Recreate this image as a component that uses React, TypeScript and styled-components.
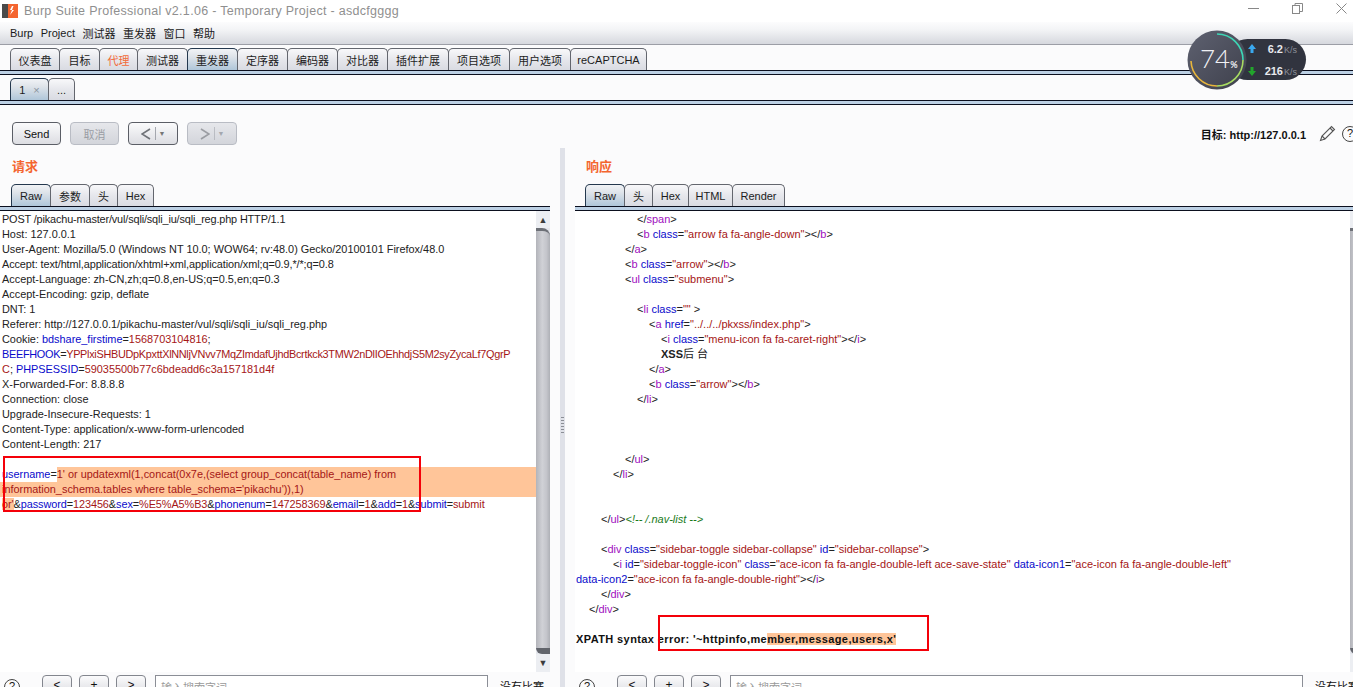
import React from 'react';
import styled, { createGlobalStyle } from 'styled-components';

const GlobalStyle = createGlobalStyle`
  html, body {
    margin: 0;
    padding: 0;
    background: #fbfbfc;
  }
  * {
    box-sizing: border-box;
  }
`;

const FONT = `"Liberation Sans", "Noto Sans CJK SC", sans-serif`;

const MAIN_TABS = [
  { label: '仪表盘', w: 49 },
  { label: '目标', w: 40 },
  { label: '代理', w: 38, hot: true },
  { label: '测试器', w: 50 },
  { label: '重发器', w: 50, active: true },
  { label: '定序器', w: 50 },
  { label: '编码器', w: 50 },
  { label: '对比器', w: 50 },
  { label: '插件扩展', w: 61 },
  { label: '项目选项', w: 61 },
  { label: '用户选项', w: 61 },
  { label: 'reCAPTCHA', w: 76 },
];

type Tok = [string, string?];

// k = key, v = value, t = tag, g = green comment
const REQUEST_HEAD: { toks: Tok[]; tight?: number }[] = [
  { toks: [['POST /pikachu-master/vul/sqli/sqli_iu/sqli_reg.php HTTP/1.1']], tight: 0.15 },
  { toks: [['Host: 127.0.0.1']] },
  { toks: [['User-Agent: Mozilla/5.0 (Windows NT 10.0; WOW64; rv:48.0) Gecko/20100101 Firefox/48.0']] },
  { toks: [['Accept: text/html,application/xhtml+xml,application/xml;q=0.9,*/*;q=0.8']], tight: 0.1 },
  { toks: [['Accept-Language: zh-CN,zh;q=0.8,en-US;q=0.5,en;q=0.3']] },
  { toks: [['Accept-Encoding: gzip, deflate']] },
  { toks: [['DNT: 1']] },
  { toks: [['Referer: http://127.0.0.1/pikachu-master/vul/sqli/sqli_iu/sqli_reg.php']] },
  { toks: [['Cookie: '], ['bdshare_firstime', 'k'], ['='], ['1568703104816', 'v'], [';']] },
  { toks: [['BEEFHOOK', 'k'], ['='], ['YPPlxiSHBUDpKpxttXlNNljVNvv7MqZImdafUjhdBcrtkck3TMW2nDlIOEhhdjS5M2syZycaLf7QgrP', 'v']], tight: 0.3 },
  { toks: [['C', 'v'], ['; '], ['PHPSESSID', 'k'], ['='], ['59035500b77c6bdeadd6c3a157181d4f', 'v']] },
  { toks: [['X-Forwarded-For: 8.8.8.8']] },
  { toks: [['Connection: close']] },
  { toks: [['Upgrade-Insecure-Requests: 1']] },
  { toks: [['Content-Type: application/x-www-form-urlencoded']] },
  { toks: [['Content-Length: 217']] },
  { toks: [] },
];

const RESPONSE: { indent: number; toks: Tok[] }[] = [
  { indent: 62, toks: [['</'], ['span', 't'], ['>']] },
  { indent: 62, toks: [['<'], ['b', 't'], [' '], ['class', 'k'], ['='], ['"arrow fa fa-angle-down"', 'v'], ['></'], ['b', 't'], ['>']] },
  { indent: 50, toks: [['</'], ['a', 't'], ['>']] },
  { indent: 50, toks: [['<'], ['b', 't'], [' '], ['class', 'k'], ['='], ['"arrow"', 'v'], ['></'], ['b', 't'], ['>']] },
  { indent: 50, toks: [['<'], ['ul', 't'], [' '], ['class', 'k'], ['='], ['"submenu"', 'v'], ['>']] },
  { indent: 0, toks: [] },
  { indent: 62, toks: [['<'], ['li', 't'], [' '], ['class', 'k'], ['='], ['""', 'v'], [' >']] },
  { indent: 74, toks: [['<'], ['a', 't'], [' '], ['href', 'k'], ['='], ['"../../../pkxss/index.php"', 'v'], ['>']] },
  { indent: 86, toks: [['<'], ['i', 't'], [' '], ['class', 'k'], ['='], ['"menu-icon fa fa-caret-right"', 'v'], ['></'], ['i', 't'], ['>']] },
  { indent: 86, toks: [['XSS', 'b'], ['后 台']] },
  { indent: 74, toks: [['</'], ['a', 't'], ['>']] },
  { indent: 74, toks: [['<'], ['b', 't'], [' '], ['class', 'k'], ['='], ['"arrow"', 'v'], ['></'], ['b', 't'], ['>']] },
  { indent: 62, toks: [['</'], ['li', 't'], ['>']] },
  { indent: 0, toks: [] },
  { indent: 0, toks: [] },
  { indent: 0, toks: [] },
  { indent: 50, toks: [['</'], ['ul', 't'], ['>']] },
  { indent: 38, toks: [['</'], ['li', 't'], ['>']] },
  { indent: 0, toks: [] },
  { indent: 0, toks: [] },
  { indent: 26, toks: [['</'], ['ul', 't'], ['>'], ['<!-- /.nav-list -->', 'g']] },
  { indent: 0, toks: [] },
  { indent: 26, toks: [['<'], ['div', 't'], [' '], ['class', 'k'], ['='], ['"sidebar-toggle sidebar-collapse"', 'v'], [' '], ['id', 'k'], ['='], ['"sidebar-collapse"', 'v'], ['>']] },
  { indent: 38, toks: [['<'], ['i', 't'], [' '], ['id', 'k'], ['='], ['"sidebar-toggle-icon"', 'v'], [' '], ['class', 'k'], ['='], ['"ace-icon fa fa-angle-double-left ace-save-state"', 'v'], [' '], ['data-icon1', 'k'], ['='], ['"ace-icon fa fa-angle-double-left"', 'v']] },
  { indent: 1, toks: [['data-icon2', 'k'], ['='], ['"ace-icon fa fa-angle-double-right"', 'v'], ['></'], ['i', 't'], ['>']] },
  { indent: 26, toks: [['</'], ['div', 't'], ['>']] },
  { indent: 14, toks: [['</'], ['div', 't'], ['>']] },
  { indent: 0, toks: [] },
];

const Page = styled.div`
  position: relative;
  width: 1353px;
  height: 687px;
  overflow: hidden;
  display: flex;
  flex-direction: column;
  background: #fbfbfc;
  font-family: ${FONT};
  color: #111;
`;

const TitleBar = styled.div`
  height: 22px;
  flex: none;
  background: #fff;
  display: flex;
  align-items: center;
  padding-left: 2px;
  gap: 6px;
  font-size: 12.5px;
  letter-spacing: 0.3px;
  color: #8f8f8f;
`;

const WindowButtons = styled.div`
  margin-left: auto;
  display: flex;
  align-items: center;
  gap: 33px;
  padding: 0 6px 5px 0;
  height: 100%;
`;

const MenuBar = styled.div`
  height: 23px;
  flex: none;
  display: flex;
  align-items: center;
  padding: 0 0 0 10px;
  gap: 7.5px;
  font-size: 11px;
  background: linear-gradient(#fcfcfd, #f3f4f6 35%, #d6d8de);
  border-bottom: 1px solid #9c9ea6;
`;

const MenuItem = styled.span`
  color: #1a1a1a;
`;

const TabStrip = styled.div<{ $height: number }>`
  height: ${(p) => p.$height}px;
  flex: none;
  display: flex;
  align-items: flex-end;
  padding-left: 10px;
`;

const Tab = styled.div<{ $w: number; $active?: boolean; $hot?: boolean }>`
  width: ${(p) => p.$w}px;
  height: 22px;
  flex: none;
  display: flex;
  align-items: center;
  justify-content: center;
  gap: 8px;
  font-size: 11px;
  white-space: nowrap;
  color: ${(p) => (p.$hot ? '#f26b3a' : '#1c1c1c')};
  border: 1px solid ${(p) => (p.$active ? '#24384e' : '#63666e')};
  border-bottom: none;
  border-radius: 5px 5px 0 0;
  background: ${(p) =>
    p.$active
      ? 'linear-gradient(#f1f3f6, #dfe4ea 35%, #afc6d9)'
      : 'linear-gradient(#f8f8fa, #e6e7ec 50%, #d9dbe2)'};
  margin-right: -1px;
`;

const CloseMark = styled.span`
  font-size: 11px;
  color: #8a949e;
`;

const BlueRule = styled.div`
  height: 5px;
  flex: none;
  width: 100%;
  background: #bcd0e4;
  border-top: 1px solid #0b0f1e;
  border-bottom: 1px solid #0b0f1e;
`;

const Toolbar = styled.div`
  height: 41px;
  flex: none;
  display: flex;
  align-items: flex-end;
  padding: 0 0 1px 12px;
`;

const ToolButton = styled.div<{ $w: number; $off?: boolean; $gap: number }>`
  width: ${(p) => p.$w}px;
  height: 23px;
  margin-right: ${(p) => p.$gap}px;
  display: flex;
  align-items: center;
  justify-content: center;
  font-size: 11px;
  border-radius: 4px;
  color: ${(p) => (p.$off ? '#9a9da4' : '#111')};
  border: 1px solid ${(p) => (p.$off ? '#b9bcc4' : '#5b5e66')};
  background: ${(p) =>
    p.$off ? 'linear-gradient(#e6e7eb, #d3d5db)' : 'linear-gradient(#fbfbfc, #dcdde2)'};
`;

const ArrowSlot = styled.span<{ $off?: boolean }>`
  display: flex;
  align-items: center;
  height: 13px;
  padding-right: 4px;
  margin-right: 3px;
  border-right: 1px solid #a4a7ae;
  opacity: ${(p) => (p.$off ? 0.6 : 1)};
`;

const DropGlyph = styled.span<{ $off?: boolean }>`
  font-size: 7px;
  color: ${(p) => (p.$off ? '#a4a7ae' : '#777')};
`;

const Target = styled.div`
  margin-left: auto;
  display: flex;
  align-items: center;
  gap: 13px;
  height: 23px;
  font-size: 11px;
  font-weight: 700;
  margin-right: -5px;
`;

const Panels = styled.div`
  flex: 1;
  display: flex;
  min-height: 0;
`;

const Pane = styled.section<{ $w: number }>`
  width: ${(p) => p.$w}px;
  flex: none;
  display: flex;
  flex-direction: column;
`;

const Heading = styled.div<{ $pad: number }>`
  height: 38px;
  flex: none;
  display: flex;
  align-items: flex-end;
  padding: 0 0 9px ${(p) => p.$pad}px;
  font-size: 13px;
  font-weight: 700;
  color: #f4652f;
`;

const PaneTabs = styled.div<{ $pad: number }>`
  display: flex;
  padding-left: ${(p) => p.$pad}px;
  flex: none;
`;

const Divider = styled.div`
  width: 25px;
  flex: none;
  display: flex;
  justify-content: center;
  padding-top: 2px;
`;

const SplitBar = styled.div`
  width: 5px;
  height: 100%;
  background: #dfe1e8;
  display: flex;
  align-items: center;
  justify-content: center;
  padding-top: 14px;
`;

const SplitGrip = styled.div`
  width: 3px;
  height: 16px;
  background: repeating-linear-gradient(#8b8e96 0 1px, transparent 1px 3px);
`;

const EditorRow = styled.div`
  height: 461px;
  flex: none;
  display: flex;
  background: #fff;
`;

const Code = styled.div<{ $size: number }>`
  flex: 1;
  min-width: 0;
  padding-top: 1px;
  font-size: ${(p) => p.$size}px;
  line-height: 15px;
  white-space: pre;
  color: #222;
  background: #fff;
  overflow: hidden;
`;

const CodeLine = styled.div<{ $indent?: number; $tight?: number }>`
  height: 15px;
  padding-left: ${(p) => p.$indent ?? 2}px;
  letter-spacing: ${(p) => -(p.$tight ?? 0)}px;
`;

const FillLine = styled(CodeLine)`
  display: flex;
`;

const SelectedLine = styled(CodeLine)`
  background: #ffc599;
`;

const Tone = styled.span<{ $k?: string }>`
  color: ${(p) =>
    p.$k === 'k'
      ? '#0a0acb'
      : p.$k === 'v'
        ? '#a51616'
        : p.$k === 't'
          ? '#a010c0'
          : p.$k === 'g'
            ? '#1a7a1a'
            : '#222'};
  font-weight: ${(p) => (p.$k === 'b' ? 700 : 400)};
  font-style: ${(p) => (p.$k === 'g' ? 'italic' : 'normal')};
`;

const Sel = styled.span<{ $fill?: boolean }>`
  background: #ffc599;
  flex: ${(p) => (p.$fill ? 1 : 'none')};
`;

const Bold = styled.span<{ $hl?: boolean }>`
  font-weight: 700;
  color: #111;
  letter-spacing: 0.4px;
  background: ${(p) => (p.$hl ? '#ffc599' : 'transparent')};
`;

const Scrollbar = styled.div`
  width: 14px;
  flex: none;
  display: flex;
  flex-direction: column;
  background: #e4e6ec;
`;

const ScrollEnd = styled.div<{ $h: number }>`
  height: ${(p) => p.$h}px;
  flex: none;
  font-size: 9px;
  display: flex;
  align-items: center;
  justify-content: center;
  color: #3c3c3c;
  background: #eceef2;
`;

const ScrollThumb = styled.div`
  flex: 1;
  border-radius: 0 8px 0 6px;
  background: linear-gradient(90deg, #b3b4ba, #d0d1d6 45%, #c4c5cb 75%, #aeb0b6);
  border-top: 3px solid #6d7077;
  border-bottom: 6px solid #62656c;
`;

const FooterBar = styled.div`
  flex: 1;
  display: flex;
  align-items: flex-start;
  padding: 3px 0 0 4px;
  font-size: 11px;
  overflow: hidden;
`;

const HelpRound = styled.div`
  width: 16px;
  height: 16px;
  flex: none;
  border: 1.5px solid #444;
  border-radius: 50%;
  font-size: 11px;
  font-weight: 400;
  line-height: 13px;
  text-align: center;
`;

const FooterHelp = styled(HelpRound)`
  margin: 4px 22px 0 0;
`;

const TargetHelp = styled(HelpRound)`
  margin-left: -7px;
`;

const MiniButton = styled.div`
  width: 30px;
  height: 20px;
  flex: none;
  margin-right: 7px;
  text-align: center;
  border: 1px solid #83868e;
  border-radius: 4px;
  background: linear-gradient(#fbfbfc, #dcdde2);
  line-height: 18px;
  font-size: 12px;
`;

const SearchInput = styled.div<{ $w: number }>`
  height: 20px;
  flex: none;
  width: ${(p) => p.$w}px;
  margin: 0 12px 0 2px;
  padding: 3px 5px 0;
  background: #fff;
  border: 1px solid #8b8e96;
  color: #9a9a9a;
  font-size: 11px;
`;

const FooterHint = styled.span`
  padding-top: 3px;
  white-space: nowrap;
`;

const RedBox = styled.div<{ $x: number; $y: number; $w: number; $h: number }>`
  position: absolute;
  left: ${(p) => p.$x}px;
  top: ${(p) => p.$y}px;
  width: ${(p) => p.$w}px;
  height: ${(p) => p.$h}px;
  border: 2px solid #f40009;
  pointer-events: none;
`;

const SpeedWidget = styled.div`
  position: absolute;
  left: 1187px;
  top: 30px;
  width: 120px;
  height: 60px;
`;

const SpeedPill = styled.div`
  position: absolute;
  left: 40px;
  top: 9px;
  width: 79px;
  height: 41px;
  border-radius: 21px;
  background: #31343f;
  color: #e8e9ee;
  font-size: 11px;
  font-weight: 700;
`;

const SpeedRow = styled.div<{ $top: number }>`
  position: absolute;
  top: ${(p) => p.$top}px;
  right: 9px;
  left: 20px;
  height: 14px;
  display: flex;
  align-items: center;
  justify-content: space-between;
`;

const SpeedUnit = styled.span`
  font-size: 9px;
  font-weight: 400;
  color: #8d909a;
  margin-left: 1px;
`;

const Dial = styled.div`
  position: absolute;
  inset: 0 auto 0 0;
  width: 60px;
  height: 60px;
`;

const DialText = styled.div`
  position: absolute;
  left: 13px;
  top: 14px;
  color: #f0f1f4;
  font-size: 26px;
  font-weight: 300;
  font-family: Lato, ${FONT};
  line-height: 28px;
  white-space: nowrap;
`;

const DialPct = styled.span`
  font-size: 9px;
  font-weight: 700;
`;

function Tokens({ toks }: { toks: Tok[] }) {
  return (
    <>
      {toks.map(([text, kind], i) => (
        <Tone key={i} $k={kind}>
          {text}
        </Tone>
      ))}
    </>
  );
}

function BurpLogo() {
  return (
    <svg width="16" height="16" viewBox="0 0 16 16">
      <rect x="0" y="1" width="8" height="14" fill="#4a4a4a" />
      <rect x="6" y="1" width="10" height="14" fill="#f4652f" />
      <path d="M10 3 L8 7 H10 L8 12 L12 7 H10 L11.5 3 Z" fill="#fff" />
    </svg>
  );
}

function Pencil() {
  return (
    <svg width="17" height="17" viewBox="0 0 17 17" fill="none" stroke="#555" strokeWidth="1.1">
      <path d="M1.5 15.5 L3 11 L12.5 1.5 L15.5 4.5 L6 14 Z" />
      <path d="M3 11 L6 14 M11 3 L14 6" />
    </svg>
  );
}

function Chevron({ right }: { right?: boolean }) {
  return (
    <svg width="10" height="12" viewBox="0 0 10 12" fill="none" stroke="#6f7278" strokeWidth="1.6">
      <path d={right ? 'M1 1 L9 6 L1 11' : 'M9 1 L1 6 L9 11'} />
    </svg>
  );
}

function Footer({ inputW }: { inputW: number }) {
  return (
    <FooterBar>
      <FooterHelp>?</FooterHelp>
      <MiniButton>&lt;</MiniButton>
      <MiniButton>+</MiniButton>
      <MiniButton>&gt;</MiniButton>
      <SearchInput $w={inputW}>输入搜索字词</SearchInput>
      <FooterHint>没有比赛</FooterHint>
    </FooterBar>
  );
}

function VScroll() {
  return (
    <Scrollbar>
      <ScrollEnd $h={17}>▲</ScrollEnd>
      <ScrollThumb />
      <ScrollEnd $h={18}>▼</ScrollEnd>
    </Scrollbar>
  );
}

export default function App() {
  return (
    <>
      <GlobalStyle />
      <Page>
        <TitleBar>
          <BurpLogo />
          <span>Burp Suite Professional v2.1.06 - Temporary Project - asdcfgggg</span>
          <WindowButtons>
            <svg width="11" height="2"><rect width="11" height="1" fill="#888" /></svg>
            <svg width="11" height="11" fill="none" stroke="#888">
              <rect x="0.5" y="2.5" width="7" height="8" />
              <path d="M3 2.5 V0.5 H10.5 V8.5 H7.5" />
            </svg>
            <svg width="11" height="11" stroke="#888"><path d="M0.5 0.5 L10.5 10.5 M10.5 0.5 L0.5 10.5" /></svg>
          </WindowButtons>
        </TitleBar>
        <MenuBar>
          {['Burp', 'Project', '测试器', '重发器', '窗口', '帮助'].map((m) => (
            <MenuItem key={m}>{m}</MenuItem>
          ))}
        </MenuBar>
        <TabStrip $height={25}>
          {MAIN_TABS.map((t) => (
            <Tab key={t.label} $w={t.w + 1} $active={t.active} $hot={t.hot}>
              {t.label}
            </Tab>
          ))}
        </TabStrip>
        <BlueRule />
        <TabStrip $height={25}>
          <Tab $w={39} $active>
            1 <CloseMark>×</CloseMark>
          </Tab>
          <Tab $w={27}>...</Tab>
        </TabStrip>
        <BlueRule />
        <Toolbar>
          <ToolButton $w={49} $gap={9}>Send</ToolButton>
          <ToolButton $w={49} $gap={9} $off>取消</ToolButton>
          <ToolButton $w={50} $gap={9}>
            <ArrowSlot><Chevron /></ArrowSlot>
            <DropGlyph>▼</DropGlyph>
          </ToolButton>
          <ToolButton $w={50} $gap={0} $off>
            <ArrowSlot $off><Chevron right /></ArrowSlot>
            <DropGlyph $off>▼</DropGlyph>
          </ToolButton>
          <Target>
            <span>目标: http://127.0.0.1</span>
            <Pencil />
            <TargetHelp>?</TargetHelp>
          </Target>
        </Toolbar>
        <Panels>
          <Pane $w={550}>
            <Heading $pad={12}>请求</Heading>
            <PaneTabs $pad={11}>
              <Tab $w={40} $active>Raw</Tab>
              <Tab $w={40}>参数</Tab>
              <Tab $w={29}>头</Tab>
              <Tab $w={37}>Hex</Tab>
            </PaneTabs>
            <BlueRule />
            <EditorRow>
              <Code $size={10.9}>
                {REQUEST_HEAD.map((l, i) => (
                  <CodeLine key={i} $tight={l.tight}>
                    <Tokens toks={l.toks} />
                  </CodeLine>
                ))}
                <FillLine>
                  <Tone $k="k">username</Tone>=
                  <Sel $fill><Tone $k="v">1' or updatexml(1,concat(0x7e,(select group_concat(table_name) from</Tone></Sel>
                </FillLine>
                <SelectedLine>
                  <Tone $k="v">information_schema.tables where table_schema='pikachu')),1)</Tone>
                </SelectedLine>
                <CodeLine $tight={0.08}>
                  <Sel><Tone $k="v">or'</Tone></Sel>&<Tone $k="k">password</Tone>=<Tone $k="v">123456</Tone>&<Tone $k="k">sex</Tone>=<Tone $k="v">%E5%A5%B3</Tone>&<Tone $k="k">phonenum</Tone>=<Tone $k="v">147258369</Tone>&<Tone $k="k">email</Tone>=<Tone $k="v">1</Tone>&<Tone $k="k">add</Tone>=<Tone $k="v">1</Tone>&<Tone $k="k">submit</Tone>=<Tone $k="v">submit</Tone>
                </CodeLine>
              </Code>
              <VScroll />
            </EditorRow>
            <Footer inputW={333} />
          </Pane>
          <Divider>
            <SplitBar>
              <SplitGrip />
            </SplitBar>
          </Divider>
          <Pane $w={789}>
            <Heading $pad={11}>响应</Heading>
            <PaneTabs $pad={10}>
              <Tab $w={40} $active>Raw</Tab>
              <Tab $w={29}>头</Tab>
              <Tab $w={37}>Hex</Tab>
              <Tab $w={45}>HTML</Tab>
              <Tab $w={53}>Render</Tab>
            </PaneTabs>
            <BlueRule />
            <EditorRow>
              <Code $size={11}>
                {RESPONSE.map((l, i) => (
                  <CodeLine key={i} $indent={l.indent}>
                    <Tokens toks={l.toks} />
                  </CodeLine>
                ))}
                <CodeLine $indent={1}>
                  <Bold>XPATH syntax error: '~httpinfo,me</Bold>
                  <Bold $hl>mber,message,users,x'</Bold>
                </CodeLine>
              </Code>
              <VScroll />
            </EditorRow>
            <Footer inputW={573} />
          </Pane>
        </Panels>
        <RedBox $x={3} $y={456} $w={418} $h={56} />
        <RedBox $x={658} $y={615} $w={271} $h={36} />
        <SpeedWidget>
          <SpeedPill>
            <SpeedRow $top={3}>
              <svg width="10" height="14" viewBox="0 0 10 14"><path d="M5 2 L9 7 H6.5 V11 H3.5 V7 H1 Z" fill="#3aa8ee" /></svg>
              <span>6.2<SpeedUnit>K/s</SpeedUnit></span>
            </SpeedRow>
            <SpeedRow $top={25}>
              <svg width="10" height="14" viewBox="0 0 10 14"><path d="M5 12 L9 7 H6.5 V3 H3.5 V7 H1 Z" fill="#22a52c" /></svg>
              <span>216<SpeedUnit>K/s</SpeedUnit></span>
            </SpeedRow>
          </SpeedPill>
          <Dial>
            <svg width="60" height="60" viewBox="0 0 60 60" fill="none">
              <defs>
                <linearGradient id="dialBg" x1="0" y1="0" x2="1" y2="1">
                  <stop offset="0" stopColor="#5e6170" />
                  <stop offset="1" stopColor="#3e404c" />
                </linearGradient>
              </defs>
              <circle cx="30" cy="30" r="29.5" fill="url(#dialBg)" />
              <path d="M30 4 A26 26 0 0 1 56 30" stroke="#3dd6b5" strokeWidth="1.6" />
              <path d="M56 30 A26 26 0 0 1 30 56" stroke="#a8dc62" strokeWidth="1.6" />
              <path d="M30 56 A26 26 0 0 1 4 31" stroke="#e8b63c" strokeWidth="1.6" />
            </svg>
            <DialText>74<DialPct>%</DialPct></DialText>
          </Dial>
        </SpeedWidget>
      </Page>
    </>
  );
}
